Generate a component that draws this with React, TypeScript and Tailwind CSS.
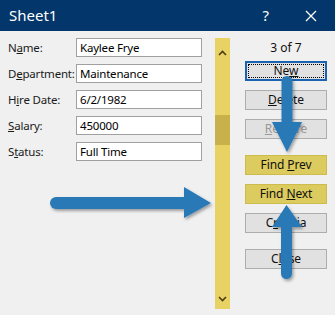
import React from "react";

const font = { fontFamily: '"Noto Sans", "Open Sans", "Liberation Sans", sans-serif' };

function Row({ label, value }: { label: [string, string, string]; value: string }) {
  return (
    <div className="flex items-center h-[19px]">
      <div className="w-[68px] text-[11.5px] tracking-[-0.2px] text-[#1a1a1a] leading-none">
        {label[0]}
        <span className="underline">{label[1]}</span>
        {label[2]}
      </div>
      <div className="w-[126px] h-[19px] bg-white border border-[#a0a0a0] flex items-center pl-[3px] text-[11.5px] tracking-[-0.2px] text-black leading-none">
        {value}
      </div>
    </div>
  );
}

function Btn({
  parts,
  kind = "gray",
  focused = false,
  disabled = false,
}: {
  parts: [string, string, string];
  kind?: "gray" | "yellow";
  focused?: boolean;
  disabled?: boolean;
}) {
  const base =
    kind === "yellow"
      ? "bg-[#dccb5e] border-[#cdbb4c]"
      : "bg-[#e1e1e1] border-[#adadad]";
  return (
    <div
      className={`relative w-[82px] h-[20px] border ${focused ? "border-2 border-[#1b63b0]" : base} ${focused ? "bg-[#e1e1e1]" : ""} flex items-center justify-center text-[12px] tracking-[-0.1px] leading-none ${disabled ? "text-[#9a9a9a]" : "text-[#111]"}`}
    >
      {focused && <div className="absolute inset-[1px] border border-dotted border-black" />}
      <span className="relative">
        {parts[0]}
        <span className="underline">{parts[1]}</span>
        {parts[2]}
      </span>
    </div>
  );
}

export default function App() {
  return (
    <div className="w-[335px] h-[315px] bg-[#f0f0f0] relative overflow-hidden" style={font}>
      {/* Title bar */}
      <div className="h-[31px] bg-[#03366a] flex items-center text-white">
        <div className="pl-[9px] text-[15px] leading-none flex-1">Sheet1</div>
        <div className="text-[15px] leading-none mr-[36px]">?</div>
        <svg width="12" height="12" viewBox="0 0 12 12" className="mr-[18px]">
          <path d="M1 1 L11 11 M11 1 L1 11" stroke="white" strokeWidth="1.3" />
        </svg>
      </div>

      <div className="flex pt-[7px]">
        {/* Form */}
        <div className="pl-[8px] flex flex-col gap-[7px] w-[215px]">
          <Row label={["N", "a", "me:"]} value="Kaylee Frye" />
          <Row label={["D", "e", "partment:"]} value="Maintenance" />
          <Row label={["H", "i", "re Date:"]} value="6/2/1982" />
          <Row label={["", "S", "alary:"]} value="450000" />
          <Row label={["S", "t", "atus:"]} value="Full Time" />
        </div>

        {/* Scrollbar */}
        <div className="w-[15px] h-[271px] bg-[#e8d264] flex flex-col items-center">
          <svg width="9" height="6" viewBox="0 0 9 6" className="mt-[12px]">
            <path d="M1 5 L4.5 1.5 L8 5" stroke="#4a3d10" strokeWidth="1.6" fill="none" />
          </svg>
          <div className="mt-[59px] w-[15px] h-[30px] bg-[#c8b14a]" />
          <div className="flex-1" />
          <svg width="9" height="6" viewBox="0 0 9 6" className="mb-[7px]">
            <path d="M1 1 L4.5 4.5 L8 1" stroke="#4a3d10" strokeWidth="1.6" fill="none" />
          </svg>
        </div>

        {/* Buttons */}
        <div className="ml-[15px] flex flex-col">
          <div className="h-[18px] flex items-center justify-center text-[12px] leading-none text-[#111] mt-[1px]">
            3 of 7
          </div>
          <div className="mt-[4px]">
            <Btn parts={["Ne", "w", ""]} focused />
          </div>
          <div className="mt-[9px]">
            <Btn parts={["", "D", "elete"]} />
          </div>
          <div className="mt-[9px]">
            <Btn parts={["", "R", "estore"]} disabled />
          </div>
          <div className="mt-[16px]">
            <Btn parts={["Find ", "P", "rev"]} kind="yellow" />
          </div>
          <div className="mt-[9px]">
            <Btn parts={["Find ", "N", "ext"]} kind="yellow" />
          </div>
          <div className="mt-[9px]">
            <Btn parts={["C", "r", "iteria"]} />
          </div>
          <div className="mt-[16px]">
            <Btn parts={["C", "l", "ose"]} />
          </div>
        </div>
      </div>

      {/* Arrows overlay */}
      <svg
        className="absolute inset-0 pointer-events-none"
        width="335"
        height="315"
        viewBox="0 0 335 315"
      >
        <defs>
          <filter id="sh" x="-20%" y="-20%" width="140%" height="140%">
            <feDropShadow dx="1.5" dy="2" stdDeviation="1.5" floodColor="#000" floodOpacity="0.35" />
          </filter>
        </defs>
        <g fill="#2979b7" filter="url(#sh)">
          <rect x="50" y="197" width="140" height="12" rx="6" />
          <path d="M184 187 L211 203 L184 218 Z" />
          <rect x="281.5" y="76" width="11" height="52" rx="5.5" />
          <path d="M272 122 L302 122 L287 152 Z" />
          <path d="M272 227 L302 227 L286.5 205 Z" />
          <rect x="281" y="222" width="11" height="57" rx="5.5" />
        </g>
      </svg>
    </div>
  );
}
